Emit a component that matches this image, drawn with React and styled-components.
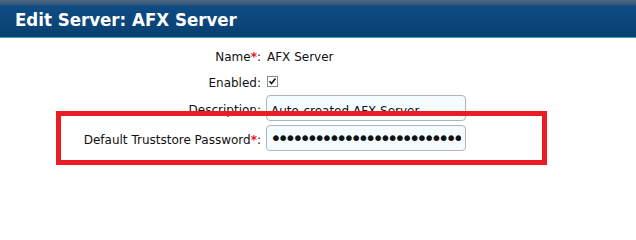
import React from 'react';
import styled, {createGlobalStyle} from 'styled-components';

const GlobalStyle = createGlobalStyle`
    html, body {
        margin: 0;
        padding: 0;
        background: #fff;
    }
    body {
        font-family: "DejaVu Sans", Verdana, sans-serif;
    }
`;

const Page = styled.div`
    position: relative;
    width: 636px;
    height: 210px;
    overflow: hidden;
    background: #fff;
`;

const Header = styled.div`
    height: 37px;
    border-bottom: 1px solid #2ba3c4;
    background: linear-gradient(to bottom, #4a6885 0px, #3a5a7a 4px, #0e4c82 6px, #0c477c 20px, #0a3f70 37px);
    display: flex;
    align-items: center;
    padding-left: 15px;
`;

const Title = styled.h1`
    margin: 0;
    color: #fff;
    font-family: "DejaVu Sans Condensed", "DejaVu Sans", Verdana, sans-serif;
    font-stretch: condensed;
    font-weight: bold;
    font-size: 18.5px;
    padding-top: 2px;
`;

const Form = styled.div`
    padding-top: 7px;
    display: flex;
    flex-direction: column;
`;

const Row = styled.div`
    display: flex;
    align-items: center;
    height: ${props => props.$h}px;
    font-size: 12px;
    color: #111;
`;

const Label = styled.div`
    width: 266px;
    text-align: right;
    padding-right: 5px;
    box-sizing: border-box;
    padding-top: ${props => props.$shift || 0}px;
    white-space: nowrap;
`;

const Req = styled.span`
    color: #e8141c;
    font-weight: bold;
`;

const Value = styled.span`
    padding-left: 1px;
`;

const Check = styled.span`
    display: inline-block;
    width: 11px;
    height: 11px;
    box-sizing: border-box;
    border: 1px solid #8a8a8a;
    background: #fff;
    margin-left: 1px;
    svg {
        display: block;
    }
`;

const Input = styled.input`
    width: 200px;
    height: 26px;
    box-sizing: border-box;
    border: 1px solid #b4b4b4;
    border-radius: 4px;
    background: #f4fcff;
    font-family: "DejaVu Sans", Verdana, sans-serif;
    font-size: 12px;
    color: #111;
    padding: 5px 4px 0 4px;
    margin: 0;
    outline: none;
`;

const PasswordInput = styled(Input)`
    font-size: 20px;
    letter-spacing: -4.5px;
    padding: 0 4px 0 3px;
`;

// red annotation frame drawn over the password row
const Highlight = styled.div`
    position: absolute;
    left: 56px;
    top: 111px;
    width: 491px;
    height: 54px;
    box-sizing: border-box;
    border: 5px solid #ec1c24;
    pointer-events: none;
`;

export default function App() {
    return (
        <Page>
            <GlobalStyle/>
            <Header>
                <Title>Edit Server: AFX Server</Title>
            </Header>
            <Form>
                <Row $h={24}>
                    <Label>Name<Req>*</Req>:</Label>
                    <Value>AFX Server</Value>
                </Row>
                <Row $h={24}>
                    <Label $shift={3}>Enabled:</Label>
                    <Check>
                        <svg width="9" height="9" viewBox="0 0 9 9">
                            <path d="M1.5 4.2 L3.5 6.5 L7.5 1.5" fill="none" stroke="#111" strokeWidth="1.6"/>
                        </svg>
                    </Check>
                </Row>
                <Row $h={30}>
                    <Label $shift={3}>Description:</Label>
                    <Input type="text" readOnly value="Auto-created AFX Server"/>
                </Row>
                <Row $h={30}>
                    <Label $shift={3}>Default Truststore Password<Req>*</Req>:</Label>
                    <PasswordInput type="password" readOnly value="abcdefghijklmnopqrstuvwxyz12"/>
                </Row>
            </Form>
            <Highlight/>
        </Page>
    );
}
